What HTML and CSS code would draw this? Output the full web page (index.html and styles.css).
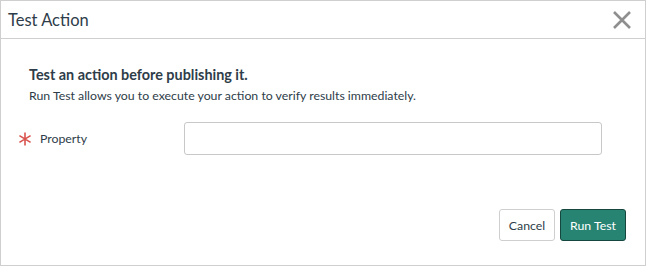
FILE: index.html
```html
<!DOCTYPE html>
<html>
<head>
<meta charset="utf-8">
<link rel="stylesheet" href="styles.css">
</head>
<body>
<div class="modal">
  <div class="modal-header">
    <h1 class="modal-title">Test Action</h1>
    <button class="close" aria-label="Close">
      <svg width="20" height="20" viewBox="0 0 20 20"><path d="M2 2 L18 18 M18 2 L2 18" stroke="#8f8f8f" stroke-width="2.6" fill="none"/></svg>
    </button>
  </div>
  <div class="modal-body">
    <h2 class="intro-title">Test an action before publishing it.</h2>
    <p class="intro-text">Run Test allows you to execute your action to verify results immediately.</p>
    <div class="field">
      <div class="label">
        <svg class="req" width="12" height="14" viewBox="0 0 12 14"><path d="M6 0.5 V13.5 M0.4 3.6 L11.6 10.4 M0.4 10.4 L11.6 3.6" stroke="#d9534f" stroke-width="1.6" fill="none"/></svg>
        <span>Property</span>
      </div>
      <input class="input" type="text">
    </div>
  </div>
  <div class="modal-footer">
    <button class="btn btn-default">Cancel</button>
    <button class="btn btn-primary">Run Test</button>
  </div>
</div>
</body>
</html>
```
FILE: styles.css
```css
* { box-sizing: border-box; }
html, body { margin: 0; padding: 0; background: #fff; }
body {
  font-family: "Lato", "Liberation Sans", sans-serif;
  color: #2e3d49;
}
.modal {
  width: 646px;
  height: 266px;
  border: 1px solid #cfcfcf;
  display: flex;
  flex-direction: column;
}
.modal-header {
  height: 38px;
  border-bottom: 1px solid #cfcfcf;
  display: flex;
  align-items: center;
  justify-content: space-between;
  padding: 0 13px 0 7px;
}
.modal-title {
  margin: 0;
  font-size: 16.5px;
  font-weight: 400;
  color: #2e3d49;
}
.close {
  border: 0;
  background: none;
  padding: 0;
  width: 20px;
  height: 20px;
  display: flex;
}
.modal-body {
  flex: 1;
  padding: 27px 43px 0 28px;
}
.intro-title {
  margin: 0;
  font-size: 14.4px;
  font-weight: 700;
  line-height: 18px;
  color: #2e3d49;
}
.intro-text {
  margin: 4px 0 0;
  font-size: 12.3px;
  line-height: 16px;
  color: #2e3d49;
}
.field {
  display: flex;
  align-items: center;
  margin-top: 18px;
}
.label {
  width: 165px;
  margin-left: -10px;
  display: flex;
  align-items: center;
  gap: 9px;
  font-size: 12.3px;
  color: #2e3d49;
}
.input {
  flex: 1;
  height: 33px;
  border: 1px solid #c8c8c8;
  border-radius: 3px;
  outline: none;
}
.modal-footer {
  display: flex;
  justify-content: flex-end;
  gap: 5px;
  padding: 0 19px 24px 0;
}
.btn {
  height: 32px;
  border-radius: 3px;
  font-family: inherit;
  font-size: 12.3px;
  padding: 0;
}
.btn-default {
  width: 56px;
  background: #fff;
  border: 1px solid #cfcfcf;
  color: #2e3d49;
}
.btn-primary {
  width: 66px;
  background: #278473;
  border: 1px solid #15473f;
  color: #fff;
}
```
